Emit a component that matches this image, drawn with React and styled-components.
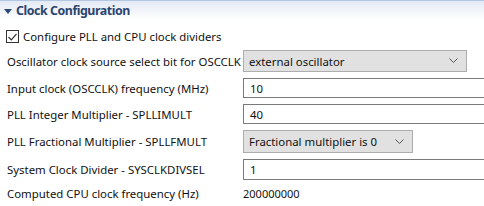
import React from 'react'
import styled, { createGlobalStyle } from 'styled-components'

const GlobalStyle = createGlobalStyle`
	body {
		margin: 0;
		background: #fff;
		font-family: "Noto Sans", "Liberation Sans", sans-serif;
		font-size: 11.4px;
		color: #111;
	}
`

const Section = styled.div`
	width: 484px;
	height: 206px;
	overflow: hidden;
`

const Header = styled.div`
	height: 19px;
	border-top: 1px solid #b4c7e0;
	background: linear-gradient(to bottom, #e3eaf4, #ffffff);
	display: flex;
	align-items: center;
	padding-left: 4px;
	gap: 4px;
`

const Caret = styled.span`
	width: 0;
	height: 0;
	border-left: 4px solid transparent;
	border-right: 4px solid transparent;
	border-top: 5px solid #2b4a74;
	margin-top: 1px;
`

const Title = styled.span`
	font-weight: bold;
	font-size: 12.4px;
	letter-spacing: -0.45px;
	color: #2b4470;
`

const CheckRow = styled.label`
	display: flex;
	align-items: center;
	gap: 4px;
	padding: 8px 0 0 6px;
	height: 17px;
`

const Box = styled.span`
	width: 11px;
	height: 11px;
	border: 1px solid #333;
	display: flex;
	align-items: center;
	justify-content: center;
`

const Form = styled.div`
	display: grid;
	grid-template-columns: 236px 1fr;
	row-gap: 6px;
	padding: 5px 0 0 7px;
	align-items: center;
`

const Label = styled.span`
	white-space: nowrap;
`

const Select = styled.div`
	width: ${p => p.$w}px;
	height: ${p => p.$h}px;
	box-sizing: border-box;
	background: #e1e1e1;
	border: 1px solid #adadad;
	display: flex;
	align-items: center;
	justify-content: space-between;
	padding: 0 8px 0 5px;
`

const Input = styled.div`
	width: 250px;
	height: ${p => p.$h}px;
	box-sizing: border-box;
	border: 1px solid #7a7a7a;
	background: #fff;
	display: flex;
	align-items: center;
	padding-left: 6px;
`

const Value = styled.span`
	font-size: 11px;
`

const Chevron = () => (
	<svg width="9" height="6" viewBox="0 0 9 6">
		<path d="M0.5 0.5 L4.5 4.5 L8.5 0.5" fill="none" stroke="#555" strokeWidth="1" />
	</svg>
)

const App = () => (
	<>
		<GlobalStyle />
		<Section>
			<Header>
				<Caret />
				<Title>Clock Configuration</Title>
			</Header>
			<CheckRow>
				<Box>
					<svg width="9" height="8" viewBox="0 0 9 8">
						<path d="M0.5 4 L3.3 6.8 L8.5 0.8" fill="none" stroke="#333" strokeWidth="1.2" />
					</svg>
				</Box>
				Configure PLL and CPU clock dividers
			</CheckRow>
			<Form>
				<Label>Oscillator clock source select bit for OSCCLK</Label>
				<Select $w={224} $h={22}>external oscillator<Chevron /></Select>
				<Label>Input clock (OSCCLK) frequency (MHz)</Label>
				<Input $h={20}>10</Input>
				<Label>PLL Integer Multiplier - SPLLIMULT</Label>
				<Input $h={20}>40</Input>
				<Label>PLL Fractional Multiplier - SPLLFMULT</Label>
				<Select $w={170} $h={23}>Fractional multiplier is 0<Chevron /></Select>
				<Label>System Clock Divider - SYSCLKDIVSEL</Label>
				<Input $h={21}>1</Input>
				<Label>Computed CPU clock frequency (Hz)</Label>
				<Value>200000000</Value>
			</Form>
		</Section>
	</>
)

export default App
